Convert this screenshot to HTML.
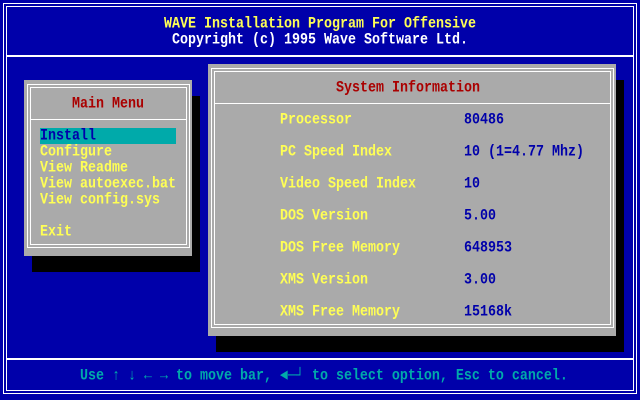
<!DOCTYPE html>
<html><head><meta charset="utf-8"><style>
*{margin:0;padding:0;box-sizing:border-box}
body{width:640px;height:400px;background:#0000aa;position:relative;overflow:hidden;font-family:"Liberation Mono","DejaVu Sans Mono",monospace;font-size:13.33px;font-weight:bold;line-height:16px}
.a{position:absolute}
.t{position:absolute;white-space:pre;height:16px;margin-top:2px;transform:scaleY(1.15);transform-origin:50% 50%}
.y{color:#ffff55}.w{color:#fff}.r{color:#aa0000}.b{color:#0000aa}.c{color:#00aaaa}
</style></head><body>
<div class="a" style="left:3px;top:3px;width:634px;height:391px;border:1px solid #fff"></div>
<div class="a" style="left:6px;top:6px;width:628px;height:385px;border:1px solid #fff"></div>
<div class="a" style="left:6px;top:55px;width:628px;height:2px;background:#fff"></div>
<div class="a" style="left:6px;top:358px;width:628px;height:2px;background:#fff"></div>
<div class="t y" style="left:0;width:640px;text-align:center;top:15px">WAVE Installation Program For Offensive</div>
<div class="t w" style="left:0;width:640px;text-align:center;top:31px">Copyright (c) 1995 Wave Software Ltd.</div>

<div class="a" style="left:32px;top:96px;width:168px;height:176px;background:#000"></div>
<div class="a" style="left:24px;top:80px;width:168px;height:176px;background:#aaa"></div>
<div class="a" style="left:27px;top:84px;width:163px;height:164px;border:1px solid #fff"></div>
<div class="a" style="left:30px;top:87px;width:157px;height:158px;border:1px solid #fff"></div>
<div class="a" style="left:30px;top:119px;width:157px;height:1px;background:#fff"></div>
<div class="t r" style="left:72px;top:95px">Main Menu</div>
<div class="a" style="left:40px;top:128px;width:136px;height:16px;background:#00aaaa"></div>
<div class="t b" style="left:40px;top:127px">Install</div>
<div class="t y" style="left:40px;top:143px">Configure</div>
<div class="t y" style="left:40px;top:159px">View Readme</div>
<div class="t y" style="left:40px;top:175px">View autoexec.bat</div>
<div class="t y" style="left:40px;top:191px">View config.sys</div>
<div class="t y" style="left:40px;top:223px">Exit</div>

<div class="a" style="left:216px;top:80px;width:408px;height:272px;background:#000"></div>
<div class="a" style="left:208px;top:64px;width:408px;height:272px;background:#aaa"></div>
<div class="a" style="left:211px;top:68px;width:403px;height:260px;border:1px solid #fff"></div>
<div class="a" style="left:214px;top:71px;width:397px;height:254px;border:1px solid #fff"></div>
<div class="a" style="left:214px;top:103px;width:397px;height:1px;background:#fff"></div>
<div class="t r" style="left:336px;top:79px">System Information</div>
<div class="t y" style="left:280px;top:111px">Processor</div><div class="t b" style="left:464px;top:111px">80486</div>
<div class="t y" style="left:280px;top:143px">PC Speed Index</div><div class="t b" style="left:464px;top:143px">10 (1=4.77 Mhz)</div>
<div class="t y" style="left:280px;top:175px">Video Speed Index</div><div class="t b" style="left:464px;top:175px">10</div>
<div class="t y" style="left:280px;top:207px">DOS Version</div><div class="t b" style="left:464px;top:207px">5.00</div>
<div class="t y" style="left:280px;top:239px">DOS Free Memory</div><div class="t b" style="left:464px;top:239px">648953</div>
<div class="t y" style="left:280px;top:271px">XMS Version</div><div class="t b" style="left:464px;top:271px">3.00</div>
<div class="t y" style="left:280px;top:303px">XMS Free Memory</div><div class="t b" style="left:464px;top:303px">15168k</div>

<div class="t c" style="left:80px;top:367px">Use ↑ ↓ ← → to move bar, ◄─┘ to select option, Esc to cancel.</div>
</body></html>
